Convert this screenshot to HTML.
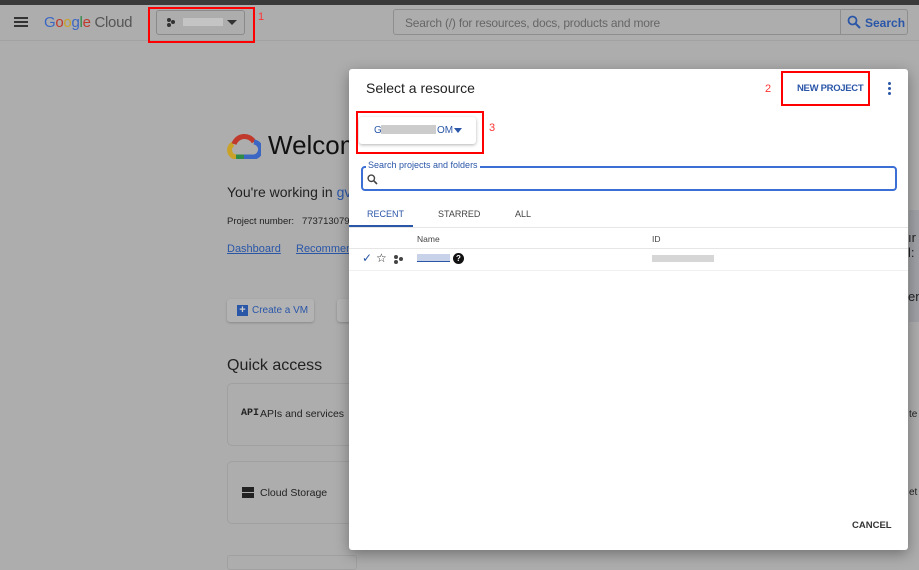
<!DOCTYPE html>
<html><head><style>
*{box-sizing:border-box;margin:0;padding:0}
body{width:919px;height:565px;overflow:hidden;background:#adadad;font-family:"Liberation Sans",sans-serif;position:relative;color:#202124}
.a{position:absolute}
.red{position:absolute;border:2px solid #f00}
</style></head><body>
<div class="a" style="left:0;top:0;width:919px;height:5px;background:#3a3a3a"></div>
<div class="a" style="left:0;top:40px;width:919px;height:1px;background:#a2a2a2"></div>
<div class="a" style="left:14px;top:17px;width:14px;height:2px;background:#333;box-shadow:0 4px 0 #333,0 8px 0 #333"></div>
<div class="a" style="left:44px;top:14px;font-size:15px;letter-spacing:-0.3px"><span style="color:#3b66c4">G</span><span style="color:#c0392b">o</span><span style="color:#c9a227">o</span><span style="color:#3b66c4">g</span><span style="color:#2e8b47">l</span><span style="color:#c0392b">e</span> <span style="color:#555">Cloud</span></div>
<div class="a" style="left:156px;top:10px;width:89px;height:25px;border:1px solid #8a8a8a;border-radius:3px"></div>
<div class="a" style="left:167px;top:18px;width:4px;height:4px;border-radius:50%;background:#333;box-shadow:4px 2px 0 #333,0 5px 0 #333"></div>
<div class="a" style="left:183px;top:18px;width:40px;height:8px;background:#c4c4c4"></div>
<div class="a" style="left:227px;top:20px;border:5px solid transparent;border-top:5px solid #333"></div>
<div class="red" style="left:148px;top:7px;width:107px;height:36px"></div>
<div class="a" style="left:258px;top:11px;color:#f33;font-size:11px">1</div>
<div class="a" style="left:393px;top:9px;width:515px;height:26px;border:1px solid #8e8e8e;border-radius:3px"></div>
<div class="a" style="left:840px;top:10px;width:1px;height:24px;background:#8e8e8e"></div>
<div class="a" style="left:405px;top:16px;font-size:12px;color:#666;letter-spacing:-0.2px">Search (/) for resources, docs, products and more</div>
<svg class="a" style="left:847px;top:15px" width="14" height="14" viewBox="0 0 14 14"><circle cx="5.5" cy="5.5" r="4" fill="none" stroke="#2a56a8" stroke-width="1.8"/><path d="M8.5 8.5L13 13" stroke="#2a56a8" stroke-width="2"/></svg>
<div class="a" style="left:865px;top:16px;font-size:12px;color:#2a56a8;font-weight:bold">Search</div>
<svg class="a" style="left:227px;top:133px" width="34" height="26" viewBox="0 0 34 26"><path d="M9 24A7 7 0 0 1 6 11" stroke="#c9a227" stroke-width="5" fill="none"/><path d="M7 11A11 11 0 0 1 27 9" stroke="#c0392b" stroke-width="5" fill="none"/><path d="M27 9A7 7 0 0 1 25 24H17" stroke="#3b66c4" stroke-width="5" fill="none"/><path d="M17 24H9" stroke="#2e8b47" stroke-width="5" fill="none"/></svg>
<div class="a" style="left:268px;top:130px;font-size:26px;color:#111">Welcome</div>
<div class="a" style="left:227px;top:184px;font-size:14px;color:#222">You're working in <span style="color:#2a56a8">gv</span></div>
<div class="a" style="left:227px;top:216px;font-size:9.5px;color:#222">Project number:&nbsp;&nbsp; 773713079</div>
<div class="a" style="left:227px;top:243px;font-size:11px;color:#2a56a8;text-decoration:underline">Dashboard</div>
<div class="a" style="left:296px;top:243px;font-size:11px;color:#2a56a8;text-decoration:underline">Recommen</div>
<div class="a" style="left:227px;top:299px;width:87px;height:23px;border-radius:3px;background:#b3b3b3;box-shadow:0 1px 2px #888"></div>
<div class="a" style="left:237px;top:305px;width:11px;height:11px;background:#2a56a8;color:#ccc;font-size:11px;line-height:10px;text-align:center;font-weight:bold">+</div>
<div class="a" style="left:252px;top:305px;font-size:10px;color:#2a56a8">Create a VM</div>
<div class="a" style="left:337px;top:299px;width:20px;height:23px;border-radius:3px;background:#b3b3b3;box-shadow:0 1px 2px #888"></div>
<div class="a" style="left:227px;top:357px;font-size:16px;color:#222">Quick access</div>
<div class="a" style="left:227px;top:383px;width:130px;height:63px;border:1px solid #a0a0a0;border-radius:5px"></div>
<div class="a" style="left:241px;top:408px;font-size:10px;font-weight:bold;font-family:'Liberation Mono',monospace;color:#222">API</div>
<div class="a" style="left:260px;top:408px;font-size:10.5px;color:#222">APIs and services</div>
<div class="a" style="left:227px;top:461px;width:130px;height:63px;border:1px solid #a0a0a0;border-radius:5px"></div>
<div class="a" style="left:242px;top:487px;width:12px;height:5px;background:#222"></div>
<div class="a" style="left:242px;top:493px;width:12px;height:5px;background:#222"></div>
<div class="a" style="left:260px;top:487px;font-size:10.5px;color:#222">Cloud Storage</div>
<div class="a" style="left:227px;top:555px;width:130px;height:15px;border:1px solid #a0a0a0;border-radius:3px"></div>
<div class="a" style="left:909px;top:210px;width:10px;height:112px;background:#9fa1a6"></div>
<div class="a" style="left:908px;top:230px;font-size:13px;color:#222">ır<br>l:</div>
<div class="a" style="left:908px;top:289px;font-size:13px;color:#222">en</div>
<div class="a" style="left:909px;top:409px;font-size:10px;color:#222">te</div>
<div class="a" style="left:909px;top:487px;font-size:10px;color:#222">et</div>
<div class="a" style="left:349px;top:69px;width:559px;height:481px;background:#fff;border-radius:3px;box-shadow:0 4px 14px rgba(0,0,0,.35)"></div>
<div class="a" style="left:366px;top:80px;font-size:14px;color:#222">Select a resource</div>
<div class="red" style="left:781px;top:71px;width:89px;height:35px"></div>
<div class="a" style="left:765px;top:83px;color:#f33;font-size:11px">2</div>
<div class="a" style="left:797px;top:83px;font-size:9.5px;color:#2a56a8;font-weight:bold;letter-spacing:-0.3px">NEW PROJECT</div>
<div class="a" style="left:888px;top:82px;width:3px;height:3px;border-radius:50%;background:#2a56a8;box-shadow:0 5px 0 #2a56a8,0 10px 0 #2a56a8"></div>
<div class="a" style="left:359px;top:117px;width:117px;height:27px;background:#fff;box-shadow:0 1px 3px rgba(0,0,0,.3);border-radius:3px"></div>
<div class="a" style="left:374px;top:125px;font-size:10px;color:#2a56a8">G</div>
<div class="a" style="left:381px;top:125px;width:55px;height:9px;background:#ccc"></div>
<div class="a" style="left:437px;top:125px;font-size:10px;color:#2a56a8">OM</div>
<div class="a" style="left:454px;top:128px;border:4px solid transparent;border-top:5px solid #2a56a8"></div>
<div class="red" style="left:356px;top:111px;width:128px;height:43px"></div>
<div class="a" style="left:489px;top:122px;color:#f33;font-size:11px">3</div>
<div class="a" style="left:361px;top:166px;width:536px;height:25px;border:2px solid #3b6fd6;border-radius:4px"></div>
<div class="a" style="left:366px;top:160px;padding:0 2px;background:#fff;font-size:9px;color:#2a56a8">Search projects and folders</div>
<svg class="a" style="left:367px;top:174px" width="11" height="11" viewBox="0 0 11 11"><circle cx="4.3" cy="4.3" r="3.2" fill="none" stroke="#444" stroke-width="1.4"/><path d="M6.6 6.6L10 10" stroke="#444" stroke-width="1.6"/></svg>
<div class="a" style="left:367px;top:209px;font-size:9px;color:#2a56a8">RECENT</div>
<div class="a" style="left:349px;top:225px;width:64px;height:2px;background:#2a56a8"></div>
<div class="a" style="left:438px;top:209px;font-size:9px;color:#444">STARRED</div>
<div class="a" style="left:515px;top:209px;font-size:9px;color:#444">ALL</div>
<div class="a" style="left:349px;top:227px;width:559px;height:1px;background:#e6e6e6"></div>
<div class="a" style="left:417px;top:234px;font-size:8.5px;color:#444">Name</div>
<div class="a" style="left:652px;top:234px;font-size:8.5px;color:#444">ID</div>
<div class="a" style="left:349px;top:248px;width:559px;height:1px;background:#e6e6e6"></div>
<div class="a" style="left:362px;top:251px;font-size:12px;color:#2a56a8">✓</div>
<div class="a" style="left:376px;top:251px;font-size:12px;color:#222">☆</div>
<div class="a" style="left:394px;top:255px;width:4px;height:4px;border-radius:50%;background:#444;box-shadow:5px 2px 0 #444,0 5px 0 #444"></div>
<div class="a" style="left:417px;top:254px;width:33px;height:8px;background:#c8d2e8;border-bottom:1px solid #2a56a8"></div>
<div class="a" style="left:453px;top:253px;width:11px;height:11px;border-radius:50%;background:#111;color:#fff;font-size:8px;font-weight:bold;text-align:center;line-height:11px">?</div>
<div class="a" style="left:652px;top:255px;width:62px;height:7px;background:#d6d6d6"></div>
<div class="a" style="left:349px;top:270px;width:559px;height:1px;background:#f0f0f0"></div>
<div class="a" style="left:852px;top:520px;font-size:9.5px;color:#333;font-weight:bold">CANCEL</div>
</body></html>
